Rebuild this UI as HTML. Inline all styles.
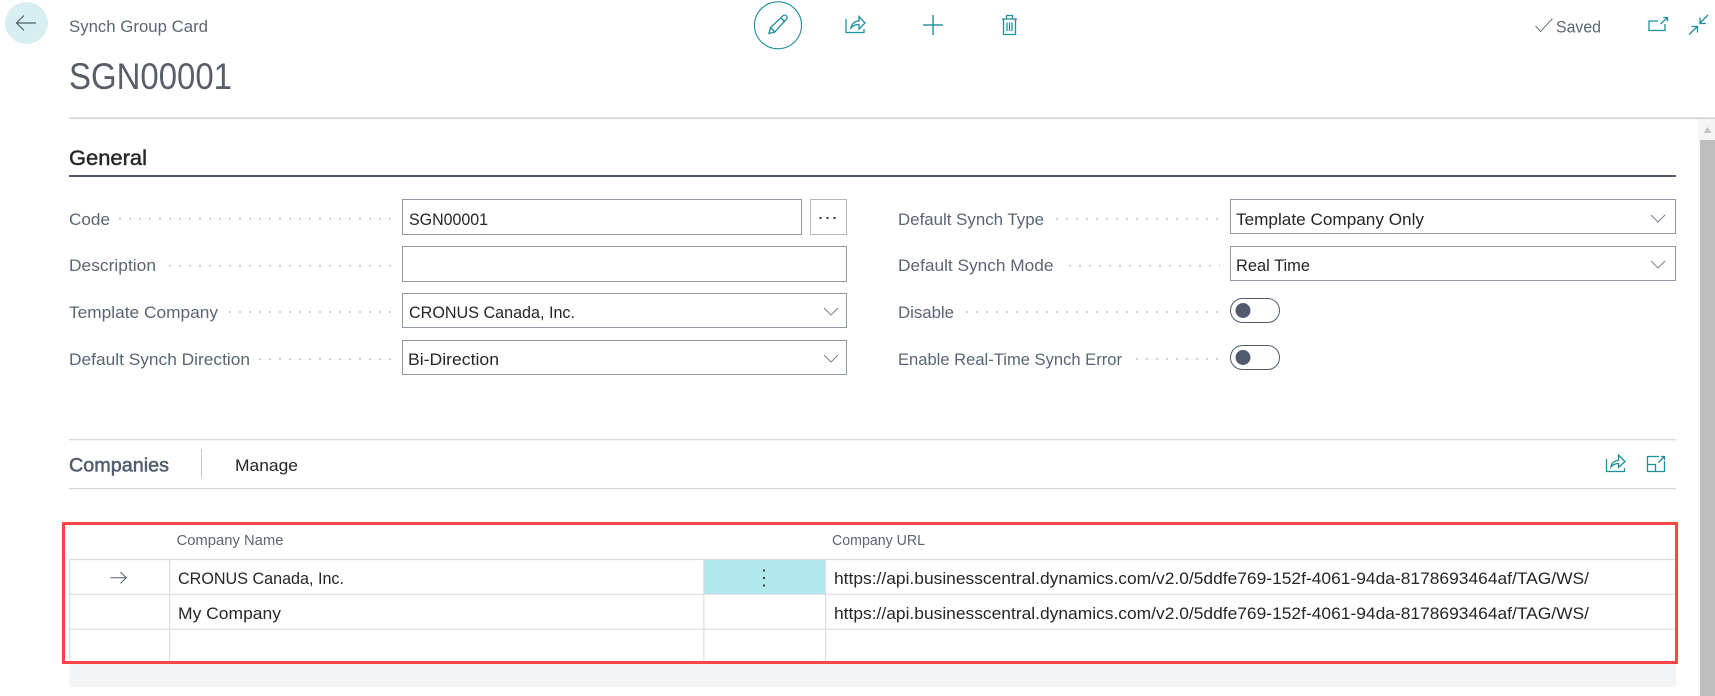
<!DOCTYPE html>
<html><head><meta charset="utf-8"><style>
html,body{margin:0;padding:0;background:#fff;width:1715px;height:696px;overflow:hidden}
svg{display:block;font-family:"Liberation Sans",sans-serif}
.l{font-size:17px;fill:#5a6575}
.v{font-size:17px;fill:#262626}
.d{stroke:#cfd1d4;stroke-width:2;stroke-dasharray:2 8}
.b{fill:#fff;stroke:#8f98a3;stroke-width:1}
.g{stroke:#dcdce3;stroke-width:1.2}
.i{fill:none;stroke:#1d8f99;stroke-width:1.3}
.c{fill:none;stroke:#6f7986;stroke-width:.9}
</style></head><body>
<svg width="1715" height="696" viewBox="0 0 1715 696" xmlns="http://www.w3.org/2000/svg">
<!-- scrollbar -->
<rect x="1698" y="119" width="17" height="577" fill="#f5f5f5"/>
<rect x="1700" y="140" width="15" height="556" fill="#bdbdbd"/>
<path d="M1703.5 133h8l-4-6z" fill="#c4c4c4"/>
<!-- header -->
<ellipse cx="26.5" cy="23" rx="21.5" ry="21" fill="#d8eff2"/>
<path d="M36 23H17M24 15.5L16.5 23L24 30.5" fill="none" stroke="#505c6d" stroke-width="1.2"/>
<text x="69" y="32" class="l" textLength="139" lengthAdjust="spacingAndGlyphs">Synch Group Card</text>
<text x="69" y="89" font-size="37" fill="#5a5e69" textLength="163" lengthAdjust="spacingAndGlyphs">SGN00001</text>
<circle cx="778" cy="25.3" r="23.5" fill="none" stroke="#1d8f99" stroke-width="1.1"/>
<path class="i" d="M769 33.5l1.5-6L783 15.800c1-1 2.500-.9 3.400 0s1 2.300 0 3.300L774.800 32zM770.500 27.500l4.300 4.500M781 18l4 4"/>
<path class="i" d="M846 19v13.500h18V29M851 28c.5-4 3.500-7 8-7v-4.500l6 6.500-6 6v-4.500c-3 0-6 1-8 3.500z"/>
<path d="M933 15v20M923 25h20" fill="none" stroke="#2a979f" stroke-width="1.5"/>
<path class="i" d="M1002 19h15M1006.500 19v-3.500h6V19M1003.500 19v15.500h12V19M1007 22.500v8.500M1009.500 22.500v8.500M1012 22.500v8.500"/>
<path d="M1535.500 26l5 5.500L1552.500 18.500" fill="none" stroke="#6a7482" stroke-width="1"/>
<text x="1556" y="32.500" class="l" textLength="45" lengthAdjust="spacingAndGlyphs">Saved</text>
<path class="i" d="M1658 21h-9v9.500h16V24M1660.500 24l7-6.500M1663.500 17.500h4v3.500"/>
<path class="i" d="M1708 15l-8 8M1700 17.500V23.500h6M1689 34.500l8.500-8M1691.500 26.500h6v6"/>
<rect x="69" y="117.300" width="1646" height="1.800" fill="#d2d6da"/>
<!-- General -->
<text x="69" y="165" font-size="21" fill="#262626" stroke="#262626" stroke-width=".45" textLength="78" lengthAdjust="spacingAndGlyphs">General</text>
<rect x="69" y="175" width="1607" height="2" fill="#505c6d"/>
<!-- left fields -->
<text x="69" y="225" class="l" textLength="41" lengthAdjust="spacingAndGlyphs">Code</text>
<line x1="119" x2="392" y1="218.700" y2="218.700" class="d"/>
<rect x="402.500" y="199.500" width="399" height="35" class="b"/>
<text x="409" y="225" class="v" textLength="79" lengthAdjust="spacingAndGlyphs">SGN00001</text>
<rect x="810.500" y="199.500" width="36" height="35" class="b" style="stroke:#b4bac0"/>
<path d="M819.500 218h2M826.500 218h2M833.500 218h2" stroke="#333" stroke-width="2" fill="none"/>

<text x="69" y="271" class="l" textLength="87" lengthAdjust="spacingAndGlyphs">Description</text>
<line x1="169" x2="392" y1="265.700" y2="265.700" class="d"/>
<rect x="402.500" y="246.500" width="444" height="35" class="b"/>

<text x="69" y="318" class="l" textLength="149" lengthAdjust="spacingAndGlyphs">Template Company</text>
<line x1="229" x2="392" y1="312" y2="312" class="d"/>
<rect x="402.500" y="293.500" width="444" height="34" class="b"/>
<text x="409" y="318" class="v" textLength="166" lengthAdjust="spacingAndGlyphs">CRONUS Canada, Inc.</text>
<path class="c" d="M824 308l7 7 7-7"/>

<text x="69" y="365" class="l" textLength="181" lengthAdjust="spacingAndGlyphs">Default Synch Direction</text>
<line x1="259" x2="392" y1="359" y2="359" class="d"/>
<rect x="402.500" y="340.500" width="444" height="34" class="b"/>
<text x="408" y="365" class="v" textLength="91" lengthAdjust="spacingAndGlyphs">Bi-Direction</text>
<path class="c" d="M824 355l7 7 7-7"/>
<!-- right fields -->
<text x="898" y="225" class="l" textLength="146" lengthAdjust="spacingAndGlyphs">Default Synch Type</text>
<line x1="1056" x2="1220" y1="218.700" y2="218.700" class="d"/>
<rect x="1230.500" y="199.500" width="445" height="34" class="b"/>
<text x="1236" y="225" class="v" textLength="188" lengthAdjust="spacingAndGlyphs">Template Company Only</text>
<path class="c" d="M1651 215l7 7 7-7"/>

<text x="898" y="271" class="l" textLength="155.500" lengthAdjust="spacingAndGlyphs">Default Synch Mode</text>
<line x1="1069" x2="1220" y1="265.700" y2="265.700" class="d"/>
<rect x="1230.500" y="246.500" width="445" height="34" class="b"/>
<text x="1236" y="271" class="v" textLength="74" lengthAdjust="spacingAndGlyphs">Real Time</text>
<path class="c" d="M1651 261l7 7 7-7"/>

<text x="898" y="318" class="l" textLength="56" lengthAdjust="spacingAndGlyphs">Disable</text>
<line x1="966" x2="1220" y1="312" y2="312" class="d"/>
<rect x="1230.500" y="298.500" width="49" height="24" rx="12" fill="#fff" stroke="#505c6d" stroke-width="1"/>
<circle cx="1243" cy="310.500" r="7.500" fill="#505c6d"/>

<text x="898" y="365" class="l" textLength="224" lengthAdjust="spacingAndGlyphs">Enable Real-Time Synch Error</text>
<line x1="1136" x2="1220" y1="359" y2="359" class="d"/>
<rect x="1230.500" y="345.500" width="49" height="24" rx="12" fill="#fff" stroke="#505c6d" stroke-width="1"/>
<circle cx="1243" cy="357.500" r="7.500" fill="#505c6d"/>
<!-- companies -->
<rect x="69" y="439" width="1607" height="1.300" fill="#d9d9d9"/>
<text x="69" y="471.500" font-size="19" fill="#505c6d" stroke="#505c6d" stroke-width=".5" textLength="100" lengthAdjust="spacingAndGlyphs">Companies</text>
<line x1="201.500" x2="201.500" y1="449" y2="478" stroke="#c8c8c8"/>
<text x="235" y="471" class="v" textLength="63" lengthAdjust="spacingAndGlyphs">Manage</text>
<path class="i" d="M1606.500 459v12.500h18V468M1611 467c.5-4 3.500-6.500 7.500-6.500V455l6.500 6.500-6.500 6v-4c-3 0-5.500 1-7.500 3.500z"/>
<path class="i" d="M1659 456.500h-11.500v15h17V461M1647.500 464.500h8v7M1658.500 462.500l6-6M1661 456.500h3.500v3.500"/>
<rect x="69" y="488" width="1607" height="1.300" fill="#d9d9d9"/>
<!-- footer band -->
<rect x="69" y="664" width="1607" height="23" fill="#f4f5f7"/>
<!-- table -->
<text x="176.500" y="545" font-size="15" fill="#5a6575" textLength="107" lengthAdjust="spacingAndGlyphs">Company Name</text>
<text x="832" y="545" font-size="15" fill="#5a6575" textLength="93" lengthAdjust="spacingAndGlyphs">Company URL</text>
<rect x="704" y="560" width="121.500" height="34" fill="#b0e8ec"/>
<path class="g" d="M69 559.500H1676M69 594.300H1676M69 629.300H1676M69.700 559v103M169.500 559v103M703.800 559v103M825.500 559v103" fill="none"/>
<path d="M110.500 577.700h15.500M120.500 572l5.700 5.700-5.700 5.700" fill="none" stroke="#505c6d" stroke-width="1"/>
<text x="178" y="584" class="v" textLength="166" lengthAdjust="spacingAndGlyphs">CRONUS Canada, Inc.</text>
<circle cx="764" cy="570.500" r="1.100" fill="#333"/><circle cx="764" cy="578" r="1.100" fill="#333"/><circle cx="764" cy="585.500" r="1.100" fill="#333"/>
<text x="834" y="584" class="v" textLength="755" lengthAdjust="spacingAndGlyphs">https://api.businesscentral.dynamics.com/v2.0/5ddfe769-152f-4061-94da-8178693464af/TAG/WS/</text>
<text x="178" y="619" class="v" textLength="103" lengthAdjust="spacingAndGlyphs">My Company</text>
<text x="834" y="619" class="v" textLength="755" lengthAdjust="spacingAndGlyphs">https://api.businesscentral.dynamics.com/v2.0/5ddfe769-152f-4061-94da-8178693464af/TAG/WS/</text>
<rect x="63.500" y="523.500" width="1613" height="139" fill="none" stroke="#ff4545" stroke-width="3"/>
</svg>
</body></html>
